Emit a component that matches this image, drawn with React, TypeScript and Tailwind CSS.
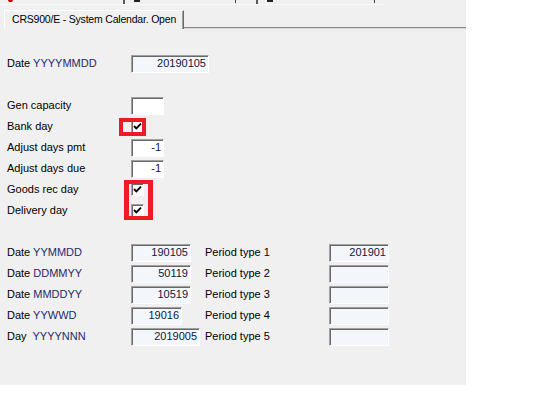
import React from "react";

const FONT = { fontFamily: '"Liberation Sans", Arial, sans-serif' };

function Field({ w, value, tint = true }: { w: number; value?: string; tint?: boolean }) {
  return (
    <div
      className={`h-[18px] border border-t-[#a0a0a0] border-l-[#a0a0a0] border-r-white border-b-white shadow-[inset_1px_1px_0_#696969] flex items-center justify-end pr-[2px] text-[11px] text-[#14143c] ${
        tint ? "bg-[#f3f7fb]" : "bg-white"
      }`}
      style={{ width: w }}
    >
      {value}
    </div>
  );
}

function Check() {
  return (
    <div className="w-[13px] h-[13px] -mt-[1px] border border-t-[#a0a0a0] border-l-[#a0a0a0] border-r-white border-b-white shadow-[inset_1px_1px_0_#696969] bg-white flex items-center justify-center">
      <svg width="9" height="9" viewBox="0 0 9 9">
        <path d="M1 4 L3.3 6.3 L8 1.6" fill="none" stroke="#000" strokeWidth="1.9" />
      </svg>
    </div>
  );
}

function Label({ text, code }: { text: string; code?: string }) {
  return (
    <div className="w-[124px] text-[11px] text-black whitespace-pre">
      {text}
      {code && <span className="text-[#1e2a6e]">{code}</span>}
    </div>
  );
}

const lower = [
  { t: "Date ", c: "YYMMDD", w: 60, v: "190105", p: "Period type 1", pv: "201901" },
  { t: "Date ", c: "DDMMYY", w: 60, v: "50119", p: "Period type 2", pv: "" },
  { t: "Date ", c: "MMDDYY", w: 60, v: "10519", p: "Period type 3", pv: "" },
  { t: "Date ", c: "YYWWD", w: 51, v: "19016", p: "Period type 4", pv: "" },
  { t: "Day  ", c: "YYYYNNN", w: 69, v: "2019005", p: "Period type 5", pv: "" },
];

export default function App() {
  return (
    <div className="w-[541px] h-[396px] bg-white flex" style={FONT}>
      <div className="relative w-[466px] h-[385px] bg-[#f0f0f0]">
        {/* cut-off window tabs at the top */}
        <div className="flex h-[5px] w-[383px] border-b border-[#fbfbfb]">
          <div className="relative w-[123px]">
            <div className="absolute left-[8px] top-0 w-[5px] h-[2px] rounded-b-full bg-[#c00000]" />
          </div>
          <div className="w-[2px] bg-[#5a5a5a]" />
          <div className="relative w-[131px]">
            <div className="absolute left-[9px] top-0 w-[6px] h-[2px] bg-[#222]" />
            <div className="absolute left-[110px] top-0 w-[1px] h-[3px] bg-[#444]" />
          </div>
          <div className="w-[2px] bg-[#5a5a5a]" />
          <div className="relative flex-1">
            <div className="absolute left-[9px] top-0 w-[6px] h-[2px] bg-[#222]" />
            <div className="absolute left-[116px] top-0 w-[1px] h-[3px] bg-[#444]" />
          </div>
        </div>

        {/* page tab */}
        <div className="flex h-[24px]">
          <div className="w-[4px] h-full shrink-0" />
          <div className="mt-[5px] h-[19px] w-[180px] shrink-0 whitespace-nowrap border-l border-t border-white border-r border-r-[#696969] shadow-[inset_-1px_0_0_#a0a0a0] flex items-center pl-[7px] text-[10.5px] tracking-[-0.2px] text-black">
            CRS900/E - System Calendar. Open
          </div>
          <div className="flex-1 h-full flex flex-col justify-end">
            <div className="h-[1px] bg-[#8a8a8a]" />
            <div className="h-[1px] bg-[#d4d4d4]" />
          </div>
        </div>

        {/* form */}
        <div className="pl-[7px] pt-[24px] flex flex-col">
          <div className="h-[21px] flex items-center">
            <Label text="Date " code="YYYYMMDD" />
            <Field w={78} value="20190105" />
          </div>
          <div className="h-[21px]" />
          <div className="h-[21px] flex items-center">
            <Label text="Gen capacity" />
            <Field w={33} tint={false} />
          </div>
          <div className="h-[21px] flex items-center">
            <Label text="Bank day" />
            <Check />
          </div>
          <div className="h-[21px] flex items-center">
            <Label text="Adjust days pmt" />
            <Field w={33} value="-1" tint={false} />
          </div>
          <div className="h-[21px] flex items-center">
            <Label text="Adjust days due" />
            <Field w={33} value="-1" tint={false} />
          </div>
          <div className="h-[21px] flex items-center">
            <Label text="Goods rec day" />
            <Check />
          </div>
          <div className="h-[21px] flex items-center">
            <Label text="Delivery day" />
            <Check />
          </div>
          <div className="h-[21px]" />
          {lower.map((r) => (
            <div key={r.p} className="h-[21px] flex items-center">
              <Label text={r.t} code={r.c} />
              <div className="w-[74px]">
                <Field w={r.w} value={r.v} />
              </div>
              <div className="w-[124px] text-[11px] text-black">{r.p}</div>
              <Field w={60} value={r.pv} />
            </div>
          ))}
        </div>

        {/* red annotation boxes */}
        <div className="absolute left-[119px] top-[118px] w-[27px] h-[18px] border-[4px] border-[#ed1c24]" />
        <div className="absolute left-[124px] top-[180px] w-[29px] h-[40px] border-[4px] border-x-[5px] border-[#ed1c24]" />
      </div>
    </div>
  );
}
